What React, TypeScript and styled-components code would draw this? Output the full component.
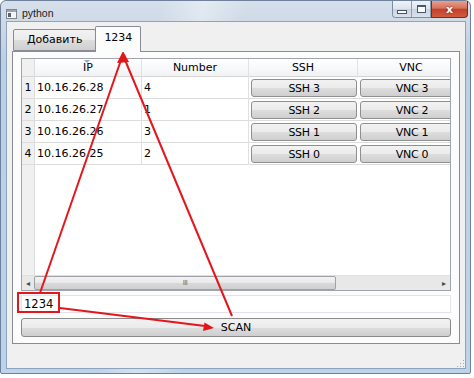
import styled, { createGlobalStyle } from "styled-components";

const GlobalStyle = createGlobalStyle`
  html, body {
    margin: 0;
    padding: 0;
    background: #ffffff;
  }
  body {
    font-family: "DejaVu Sans", sans-serif;
    font-size: 11px;
    color: #000;
  }
`;

const rows = [
  { n: 1, ip: "10.16.26.28", num: "4", ssh: "SSH 3", vnc: "VNC 3" },
  { n: 2, ip: "10.16.26.27", num: "1", ssh: "SSH 2", vnc: "VNC 2" },
  { n: 3, ip: "10.16.26.26", num: "3", ssh: "SSH 1", vnc: "VNC 1" },
  { n: 4, ip: "10.16.26.25", num: "2", ssh: "SSH 0", vnc: "VNC 0" },
];

export default function App() {
  return (
    <>
      <GlobalStyle />
      <Desktop>
        <Window>
          <TitleBar>
            <AppIcon width="11" height="10" viewBox="0 0 11 10">
              <rect x="0.5" y="0.5" width="10" height="9" fill="#f4f4f4" stroke="#7d858f" />
              <rect x="1" y="1" width="9" height="2" fill="#9aa6b3" />
              <rect x="2" y="4" width="3" height="4" fill="#5a6470" />
            </AppIcon>
            <Title>python</Title>
            <Controls>
              <CaptionGroup>
                <CaptionButton>
                  <MinGlyph />
                </CaptionButton>
                <CaptionButton>
                  <MaxGlyph />
                </CaptionButton>
              </CaptionGroup>
              <CloseButton>x</CloseButton>
            </Controls>
          </TitleBar>

          <Client>
            <TabBar>
              <Tab>Добавить</Tab>
              <Tab $active>1234</Tab>
            </TabBar>
            <Pane>
              <Table>
                <Viewport>
                  <RowHeader>
                    <Corner />
                    {rows.map((r) => (
                      <RowNumber key={r.n}>{r.n}</RowNumber>
                    ))}
                  </RowHeader>
                  <Clip>
                    <Grid>
                      <HeadCell $sorted>IP</HeadCell>
                      <HeadCell>Number</HeadCell>
                      <HeadCell>SSH</HeadCell>
                      <HeadCell>VNC</HeadCell>
                      {rows.map((r) => (
                        <Row key={r.n}>
                          <TextCell>{r.ip}</TextCell>
                          <TextCell>{r.num}</TextCell>
                          <ButtonCell>
                            <CellButton>{r.ssh}</CellButton>
                          </ButtonCell>
                          <ButtonCell>
                            <CellButton>{r.vnc}</CellButton>
                          </ButtonCell>
                        </Row>
                      ))}
                    </Grid>
                  </Clip>
                </Viewport>
                <HScroll>
                  <ScrollArrow>◂</ScrollArrow>
                  <Track>
                    <Thumb>
                      <Grip>III</Grip>
                    </Thumb>
                  </Track>
                  <ScrollArrow>▸</ScrollArrow>
                </HScroll>
              </Table>
              <LineEdit>1234</LineEdit>
              <ScanButton>SCAN</ScanButton>
            </Pane>
          </Client>
          <SizeGrip />
        </Window>

        <Annotations width="474" height="378" viewBox="0 0 474 378">
          <rect x="18" y="293" width="41" height="19" fill="none" stroke="#e4161c" strokeWidth="2" />
          <line x1="40" y1="293" x2="121" y2="60" stroke="#e4161c" strokeWidth="2" />
          <line x1="232" y1="316" x2="125" y2="60" stroke="#e4161c" strokeWidth="2" />
          <polygon points="123,51 117,63 129,62" fill="#e4161c" />
          <line x1="60" y1="308" x2="205" y2="326" stroke="#e4161c" strokeWidth="2" />
          <polygon points="214,328 203,331 204.5,322.5" fill="#e4161c" />
        </Annotations>
      </Desktop>
    </>
  );
}

const Desktop = styled.div`
  position: relative;
  width: 474px;
  height: 378px;
  overflow: hidden;
  background: #ffffff;
`;

const Window = styled.div`
  position: relative;
  box-sizing: border-box;
  width: 471px;
  height: 374px;
  display: flex;
  flex-direction: column;
  border: 1px solid #6f819a;
  border-radius: 6px 6px 2px 2px;
  background:
    linear-gradient(100deg, rgba(255,255,255,0) 30%, rgba(255,255,255,0.35) 38%, rgba(255,255,255,0) 46%),
    linear-gradient(to bottom, #d6e0eb 0px, #cdd9e6 24px, #b9d0e9 60px, #bcd3ec 100%);
`;

const TitleBar = styled.div`
  height: 23px;
  display: flex;
  align-items: flex-start;
  padding-left: 5px;
`;

const AppIcon = styled.svg`
  margin-top: 8px;
  flex: none;
`;

const Title = styled.span`
  margin-left: 5px;
  margin-top: 6px;
  font-family: "Liberation Sans", Arial, sans-serif;
  font-size: 10.5px;
  color: #1a1a1a;
`;

const Controls = styled.div`
  margin-left: auto;
  margin-right: 2px;
  display: flex;
`;

const CaptionGroup = styled.div`
  display: flex;
  height: 17px;
  box-sizing: border-box;
  border: 1px solid #7d8ea3;
  border-top: none;
  border-right: none;
  border-radius: 0 0 0 4px;
  overflow: hidden;
`;

const CaptionButton = styled.div`
  width: 18px;
  height: 16px;
  display: flex;
  align-items: center;
  justify-content: center;
  background: linear-gradient(to bottom, #eef3f9 0%, #dbe3ec 50%, #c9d3df 51%, #d8e1ec 100%);
  border-right: 1px solid #8d9cb0;
`;

const MinGlyph = styled.div`
  width: 8px;
  height: 2px;
  margin-top: 5px;
  background: #f8fbff;
  border: 1px solid #4b5766;
`;

const MaxGlyph = styled.div`
  width: 7px;
  height: 5px;
  border: 1px solid #4b5766;
  border-top-width: 2px;
  background: #f8fbff;
`;

const CloseButton = styled.div`
  width: 37px;
  height: 17px;
  box-sizing: border-box;
  border: 1px solid #7a2a22;
  border-top: none;
  border-radius: 0 0 4px 0;
  display: flex;
  align-items: center;
  justify-content: center;
  font-family: "DejaVu Sans", sans-serif;
  font-weight: bold;
  font-size: 11px;
  color: #ffffff;
  text-shadow: 0 0 2px #6d1a10;
  background: linear-gradient(to bottom, #e7a08e 0%, #d6705b 45%, #c2412b 52%, #d35a3e 100%);
`;

const Client = styled.div`
  flex: 1;
  margin: 0 4px 4px 5px;
  display: flex;
  flex-direction: column;
  box-sizing: border-box;
  border: 1px solid #8fa3ba;
  background: #f0f0f0;
  padding: 3px 5px 24px 5px;
`;

const TabBar = styled.div`
  height: 26px;
  display: flex;
  align-items: flex-end;
  padding-left: 1px;
  position: relative;
  z-index: 1;
`;

const Tab = styled.div<{ $active?: boolean }>`
  box-sizing: border-box;
  height: ${(p) => (p.$active ? "26px" : "22px")};
  padding: ${(p) => (p.$active ? "4px 8px 0" : "3px 13px 0")};
  margin-bottom: ${(p) => (p.$active ? "-1px" : "0")};
  margin-left: ${(p) => (p.$active ? "-1px" : "0")};
  border: 1px solid #898c95;
  border-bottom: ${(p) => (p.$active ? "none" : "1px solid #898c95")};
  border-radius: 2px 2px 0 0;
  font-size: 11px;
  color: #000;
  background: ${(p) =>
    p.$active
      ? "#fcfcfc"
      : "linear-gradient(to bottom, #f2f2f2 0%, #ebebeb 50%, #dddddd 51%, #cfcfcf 100%)"};
`;

const Pane = styled.div`
  flex: 1;
  display: flex;
  flex-direction: column;
  gap: 3px;
  box-sizing: border-box;
  border: 1px solid #898c95;
  background: #fcfcfc;
  padding: 6px 8px 6px 8px;
`;

const Table = styled.div`
  height: 233px;
  box-sizing: border-box;
  border: 1px solid #a0a4ac;
  background: #ffffff;
  display: flex;
  flex-direction: column;
`;

const Viewport = styled.div`
  flex: 1;
  display: flex;
  min-height: 0;
`;

const RowHeader = styled.div`
  width: 12px;
  flex: none;
  background: #f0f0f0;
  border-right: 1px solid #dcdcdc;
  display: flex;
  flex-direction: column;
`;

const Corner = styled.div`
  height: 17px;
  border-bottom: 1px solid #d5d5d5;
`;

const RowNumber = styled.div`
  height: 21px;
  border-bottom: 1px solid #dcdcdc;
  display: flex;
  align-items: center;
  justify-content: center;
  font-size: 11px;
`;

const Clip = styled.div`
  flex: 1;
  overflow: hidden;
`;

const Grid = styled.div`
  display: grid;
  width: max-content;
  grid-template-columns: 107px 107px 109px 107px;
  grid-template-rows: 18px repeat(4, 22px);
`;

const Row = styled.div`
  display: contents;
`;

const HeadCell = styled.div<{ $sorted?: boolean }>`
  position: relative;
  box-sizing: border-box;
  display: flex;
  align-items: center;
  justify-content: center;
  border-right: 1px solid #e2e2e2;
  border-bottom: 1px solid #d5d5d5;
  background: linear-gradient(to bottom, #ffffff 0%, #f7f8fa 60%, #f1f2f4 100%);
  font-size: 11px;

  &::before {
    content: "";
    display: ${(p) => (p.$sorted ? "block" : "none")};
    position: absolute;
    top: 1px;
    left: 50%;
    margin-left: -4px;
    border-left: 3px solid transparent;
    border-right: 3px solid transparent;
    border-top: 3px solid #97a8bd;
  }
`;

const TextCell = styled.div`
  box-sizing: border-box;
  display: flex;
  align-items: center;
  padding-left: 2px;
  border-right: 1px solid #e0e0e0;
  border-bottom: 1px solid #dcdcdc;
  font-size: 11px;
`;

const ButtonCell = styled.div`
  box-sizing: border-box;
  padding: 2px 1px 1px 2px;
  border-bottom: 1px solid #dcdcdc;
  display: flex;
`;

const CellButton = styled.button`
  flex: 1;
  margin: 0;
  padding: 0;
  box-sizing: border-box;
  border: 1px solid #8e8f8f;
  border-radius: 3px;
  font-family: "DejaVu Sans", sans-serif;
  font-size: 11px;
  letter-spacing: -0.3px;
  color: #000;
  background: linear-gradient(to bottom, #f2f2f2 0%, #ebebeb 50%, #dddddd 51%, #cfcfcf 100%);
`;

const HScroll = styled.div`
  height: 14px;
  flex: none;
  display: flex;
  align-items: stretch;
  background: #e8e8e8;
  border-top: 1px solid #e0e0e0;
`;

const ScrollArrow = styled.div`
  width: 12px;
  display: flex;
  align-items: center;
  justify-content: center;
  font-size: 8px;
  color: #4a4a4a;
`;

const Track = styled.div`
  flex: 1;
  display: flex;
  padding: 0 102px 0 0;
`;

const Thumb = styled.div`
  flex: 1;
  box-sizing: border-box;
  border: 1px solid #9ea2a8;
  border-radius: 2px;
  background: linear-gradient(to bottom, #f3f3f3 0%, #e8e8e8 50%, #d8d8d8 51%, #d0d0d0 100%);
  display: flex;
  align-items: center;
  justify-content: center;
`;

const Grip = styled.span`
  font-size: 7px;
  letter-spacing: -0.5px;
  color: #6a6a6a;
`;

const LineEdit = styled.div`
  height: 18px;
  box-sizing: border-box;
  border: 1px solid #e2e3ea;
  background: #ffffff;
  padding-left: 2px;
  display: flex;
  align-items: center;
  font-size: 11.5px;
  margin-top: 1px;
`;

const ScanButton = styled.button`
  height: 19px;
  margin: 2px 0 0 0;
  padding: 0;
  box-sizing: border-box;
  border: 1px solid #8a8a8a;
  border-radius: 3px;
  font-family: "DejaVu Sans", sans-serif;
  font-size: 11px;
  color: #000;
  background: linear-gradient(to bottom, #f2f2f2 0%, #ebebeb 50%, #dddddd 51%, #cfcfcf 100%);
`;

const SizeGrip = styled.div`
  position: absolute;
  right: 6px;
  bottom: 6px;
  width: 8px;
  height: 8px;
  background: radial-gradient(circle, #a8a8a8 0.8px, transparent 1px) 0 0 / 3px 3px;
  clip-path: polygon(100% 0, 100% 100%, 0 100%);
`;

const Annotations = styled.svg`
  position: absolute;
  left: 0;
  top: 0;
  pointer-events: none;
`;
